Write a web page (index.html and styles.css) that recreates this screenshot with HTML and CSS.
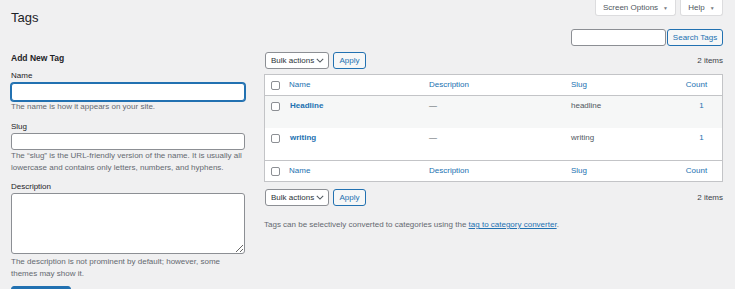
FILE: index.html
```html
<!DOCTYPE html>
<html lang="en">
<head>
<meta charset="utf-8">
<title>Tags</title>
<link rel="stylesheet" href="styles.css">
</head>
<body>
<div class="wrap">
  <div class="top">
    <h1 class="title">Tags</h1>
    <div class="screen-meta">
      <span class="meta-btn">Screen Options <span class="tri">▼</span></span>
      <span class="meta-btn">Help <span class="tri">▼</span></span>
    </div>
  </div>
  <div class="search-row">
    <input class="search-input" type="text">
    <span class="btn">Search Tags</span>
  </div>
  <div class="cols">
    <div class="col-left">
      <h2 class="form-title">Add New Tag</h2>
      <div class="field">
        <label class="label">Name</label>
        <input class="input focused" type="text">
        <p class="help">The name is how it appears on your site.</p>
      </div>
      <div class="field f-slug">
        <label class="label">Slug</label>
        <input class="input" type="text">
        <p class="help">The “slug” is the URL-friendly version of the name. It is usually all lowercase and contains only letters, numbers, and hyphens.</p>
      </div>
      <div class="field f-desc">
        <label class="label">Description</label>
        <textarea class="textarea"></textarea>
        <p class="help h-desc">The description is not prominent by default; however, some themes may show it.</p>
      </div>
      <span class="primary">Add New Tag</span>
    </div>
    <div class="col-right">
      <div class="tablenav">
        <span class="select">Bulk actions <svg class="chev" viewBox="0 0 10 6" width="8" height="5"><path d="M1 1l4 4 4-4" fill="none" stroke="#50575e" stroke-width="1.3"/></svg></span>
        <span class="btn">Apply</span>
        <span class="count">2 items</span>
      </div>
      <table class="list">
        <colgroup>
          <col class="c-cb"><col class="c-name"><col class="c-desc"><col class="c-slug"><col>
        </colgroup>
        <thead>
          <tr><th class="cb"><span class="box"></span></th><th>Name</th><th>Description</th><th>Slug</th><th class="num">Count</th></tr>
        </thead>
        <tbody>
          <tr class="alt"><td class="cb"><span class="box"></span></td><td><a class="row-title">Headline</a></td><td>—</td><td>headline</td><td class="num"><a>1</a></td></tr>
          <tr><td class="cb"><span class="box"></span></td><td><a class="row-title">writing</a></td><td>—</td><td>writing</td><td class="num"><a>1</a></td></tr>
        </tbody>
        <tfoot>
          <tr><th class="cb"><span class="box"></span></th><th>Name</th><th>Description</th><th>Slug</th><th class="num">Count</th></tr>
        </tfoot>
      </table>
      <div class="tablenav bottom">
        <span class="select">Bulk actions <svg class="chev" viewBox="0 0 10 6" width="8" height="5"><path d="M1 1l4 4 4-4" fill="none" stroke="#50575e" stroke-width="1.3"/></svg></span>
        <span class="btn">Apply</span>
        <span class="count">2 items</span>
      </div>
      <p class="note">Tags can be selectively converted to categories using the <a class="ul">tag to category converter</a>.</p>
    </div>
  </div>
</div>
</body>
</html>
```
FILE: styles.css
```css
* { box-sizing: border-box; }
html, body { margin: 0; padding: 0; }
body {
  background: #f0f0f1;
  font-family: "Liberation Sans", Arial, sans-serif;
  font-size: 8px;
  line-height: 12px;
  color: #3c434a;
  overflow: hidden;
  height: 289px;
}
.wrap { padding: 0 12px 0 11px; }
.top { display: flex; justify-content: space-between; align-items: flex-start; }
.title {
  margin: 10px 0 0 0;
  font-size: 13px;
  line-height: 16px;
  font-weight: 400;
  color: #1d2327;
}
.screen-meta { display: flex; gap: 4px; }
.meta-btn {
  display: flex; align-items: center; justify-content: center; gap: 5px;
  height: 16px;
  background: #fff;
  border: 1px solid #dcdcde;
  border-top: none;
  border-radius: 0 0 3px 3px;
  color: #50575e;
  padding: 0 4px;
  white-space: nowrap;
}
.meta-btn:first-child { width: 81px; }
.meta-btn:last-child { width: 43px; }
.tri { font-size: 5px; color: #787c82; }
.search-row { display: flex; justify-content: flex-end; margin-top: 3px; gap: 1px; }
.search-input {
  width: 95px; height: 17px; margin: 0;
  border: 1px solid #8c8f94; border-radius: 3px; background: #fff;
}
.btn {
  display: inline-flex; align-items: center; justify-content: center;
  height: 17px; padding: 0 5px;
  border: 1px solid #2271b1; border-radius: 3px;
  background: #f6f7f7; color: #2271b1;
  white-space: nowrap;
}
.search-row .btn { width: 56px; }
.cols { display: flex; gap: 18px; margin-top: 6px; }
.col-left { width: 235px; flex: none; }
.col-right { flex: 1; min-width: 0; }
.form-title {
  margin: 0; font-size: 8.5px; line-height: 12px; font-weight: 700; color: #1d2327;
}
.field { display: flex; flex-direction: column; margin-top: 6px; }
.f-slug { margin-top: 8px; }
.f-desc { margin-top: 7px; }
.label { color: #1d2327; line-height: 12px; margin-bottom: 1px; }
.f-slug .label, .f-desc .label { margin-bottom: 0; }
.input {
  width: 234px; height: 17px; margin: 0;
  border: 1px solid #8c8f94; border-radius: 3px; background: #fff;
}
.input.focused {
  height: 18px;
  border-color: #2271b1;
  box-shadow: 0 0 0 1px #2271b1;
}
.textarea {
  width: 234px; height: 61px; margin: 0;
  border: 1px solid #8c8f94; border-radius: 3px; background: #fff;
  resize: vertical; display: block;
}
.help { margin: 0; color: #646970; line-height: 12px; }
.h-desc { margin-top: 2px; }
.primary {
  display: flex; align-items: flex-end; justify-content: center;
  margin-top: 6px; width: 60px; height: 30px; padding-bottom: 2px;
  background: #2271b1; border: 1px solid #2271b1; border-radius: 3px; color: #fff;
  white-space: nowrap;
}
.tablenav { display: flex; align-items: center; gap: 4px; height: 17px; }
.select {
  display: inline-flex; align-items: center; justify-content: space-between;
  width: 64px; height: 17px; padding: 0 4px 0 5px; margin-left: 1px;
  border: 1px solid #8c8f94; border-radius: 3px; background: #fff; color: #2c3338;
  white-space: nowrap;
}
.chev { display: block; }
.tablenav .btn { width: 33px; }
.count { margin-left: auto; color: #3c434a; }
.list {
  width: 100%;
  margin-top: 5px;
  border: 1px solid #c3c4c7;
  border-spacing: 0;
  background: #fff;
  table-layout: fixed;
}
.c-cb { width: 19px; }
.c-name { width: 140px; }
.c-desc { width: 142px; }
.c-slug { width: 114px; }
.list th {
  text-align: left; font-weight: 400; color: #2271b1;
  padding: 4px 5px; line-height: 12px; height: 20px;
}
.list thead th { border-bottom: 1px solid #c3c4c7; }
.list tfoot th { border-top: 1px solid #c3c4c7; }
.list td {
  padding: 4px 5px 16px; line-height: 12px; color: #50575e; vertical-align: top;
}
.list tr.alt td { background: #f6f7f7; }
.list .cb { padding-left: 6px; padding-right: 0; }
.list td.cb { padding-top: 6px; }
.box {
  display: block; width: 9px; height: 9px;
  border: 1px solid #8c8f94; border-radius: 2px; background: #fff;
}
.list .num { text-align: center; }
.list th.num { padding-right: 14px; }
.list td.num { padding-left: 6px; }
a { color: #2271b1; text-decoration: none; }
.row-title { font-weight: 700; padding-left: 1px; }
.tablenav.bottom { margin-top: 7px; }
.note { margin: 13px 0 0; color: #646970; }
.ul { text-decoration: underline; }
```
